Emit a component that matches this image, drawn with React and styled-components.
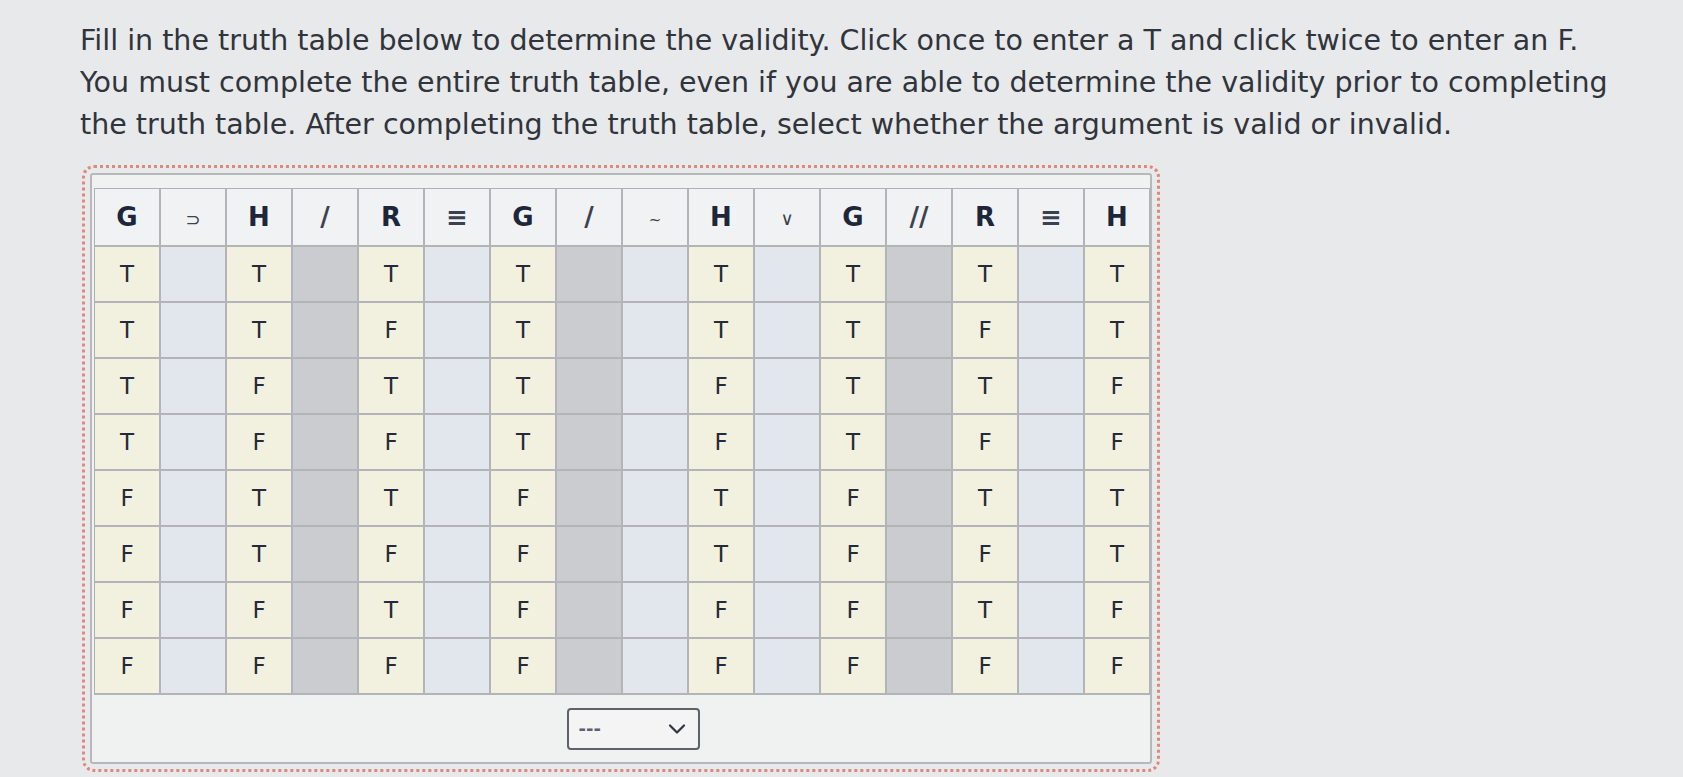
import React from "react";
import styled, { createGlobalStyle } from "styled-components";

const Global = createGlobalStyle`
  html, body { margin: 0; padding: 0; }
  body {
    background: #e8e9eb;
    font-family: "DejaVu Sans", Verdana, sans-serif;
    width: 1683px;
    height: 777px;
    overflow: hidden;
  }
`;

const Page = styled.main`
  padding: 20px 0 0 80px;
  box-sizing: border-box;
`;

const Prompt = styled.p`
  margin: 0;
  width: 1535px;
  font-size: 28.5px;
  line-height: 42px;
  color: #30343b;
`;

const Outline = styled.section`
  margin: 19px 0 0 2px;
  width: 1078px;
  box-sizing: border-box;
  border: 3px dotted #df887c;
  border-radius: 12px;
  padding: 5px;
`;

const Panel = styled.div`
  background: #f0f1f1;
  border: 2px solid #b7b8ba;
  border-radius: 3px;
  padding: 13px 0 0 2px;
`;

const Table = styled.div`
  display: grid;
  grid-template-columns: repeat(16, 66px);
  grid-template-rows: 58px repeat(8, 56px);
  border-top: 1px solid #aeb1b4;
  border-left: 1px solid #aeb1b4;
  width: 1056px;
  box-sizing: border-box;
`;

const kindBg = {
  given: "#f2f0de",
  open: "#e2e7ed",
  sep: "#cbcccf",
};

const Head = styled.div`
  background: #f1f2f3;
  border-right: 2px solid #b2b4b7;
  border-bottom: 2px solid #b2b4b7;
  display: flex;
  align-items: center;
  justify-content: center;
  color: ${(p) => (p.$op ? "#3a4150" : "#1d2739")};
  font-weight: ${(p) => (p.$light ? 400 : 700)};
  font-size: ${(p) => p.$size || 26}px;
  padding-top: ${(p) => p.$drop || 0}px;
`;

const Cell = styled.div`
  background: ${(p) => kindBg[p.$kind]};
  border-right: 2px solid #b2b4b7;
  border-bottom: 2px solid #b2b4b7;
  display: flex;
  align-items: center;
  justify-content: center;
  font-size: 23px;
  color: #262a38;
  cursor: ${(p) => (p.$kind === "open" ? "pointer" : "default")};
`;

const Footer = styled.div`
  height: 67px;
  display: flex;
  align-items: center;
  justify-content: center;
  padding-left: 22px;
`;

const Select = styled.button`
  width: 133px;
  height: 42px;
  box-sizing: border-box;
  border: 2px solid #5f6268;
  border-radius: 4px;
  background: #f4f4f4;
  display: flex;
  align-items: center;
  justify-content: space-between;
  padding: 0 12px 0 10px;
  font-family: "DejaVu Sans", Verdana, sans-serif;
  font-weight: 700;
  font-size: 18px;
  color: #5b6172;
`;

const Chevron = () => (
  <svg width="18" height="12" viewBox="0 0 18 12" aria-hidden="true">
    <path d="M2 2.5 L9 9.5 L16 2.5" fill="none" stroke="#2f3440" strokeWidth="2.2" strokeLinecap="round" strokeLinejoin="round" />
  </svg>
);

const G = ["T", "T", "T", "T", "F", "F", "F", "F"];
const H = ["T", "T", "F", "F", "T", "T", "F", "F"];
const R = ["T", "F", "T", "F", "T", "F", "T", "F"];

const columns = [
  { label: "G", kind: "given", vals: G },
  { label: "⊃", kind: "open", op: true, light: true, size: 18, drop: 4 },
  { label: "H", kind: "given", vals: H },
  { label: "/", kind: "sep", op: true },
  { label: "R", kind: "given", vals: R },
  { label: "≡", kind: "open", op: true },
  { label: "G", kind: "given", vals: G },
  { label: "/", kind: "sep", op: true },
  { label: "~", kind: "open", op: true, light: true, size: 15, drop: 6 },
  { label: "H", kind: "given", vals: H },
  { label: "∨", kind: "open", op: true, light: true, size: 18, drop: 3 },
  { label: "G", kind: "given", vals: G },
  { label: "//", kind: "sep", op: true },
  { label: "R", kind: "given", vals: R },
  { label: "≡", kind: "open", op: true },
  { label: "H", kind: "given", vals: H },
];

export default function App() {
  return (
    <>
      <Global />
      <Page>
        <Prompt>
          Fill in the truth table below to determine the validity. Click once to enter a T and click twice to enter an F.
          You must complete the entire truth table, even if you are able to determine the validity prior to completing
          the truth table. After completing the truth table, select whether the argument is valid or invalid.
        </Prompt>
        <Outline>
          <Panel>
            <Table>
              {columns.map((c, i) => (
                <Head
                  key={"h" + i}
                  style={{ gridColumn: i + 1, gridRow: 1 }}
                  $op={c.op}
                  $light={c.light}
                  $size={c.size}
                  $drop={c.drop}
                >
                  {c.label}
                </Head>
              ))}
              {columns.map((c, i) =>
                Array.from({ length: 8 }).map((_, r) => (
                  <Cell key={i + "-" + r} style={{ gridColumn: i + 1, gridRow: r + 2 }} $kind={c.kind}>
                    {c.vals ? c.vals[r] : ""}
                  </Cell>
                ))
              )}
            </Table>
            <Footer>
              <Select type="button">
                <span>---</span>
                <Chevron />
              </Select>
            </Footer>
          </Panel>
        </Outline>
      </Page>
    </>
  );
}
